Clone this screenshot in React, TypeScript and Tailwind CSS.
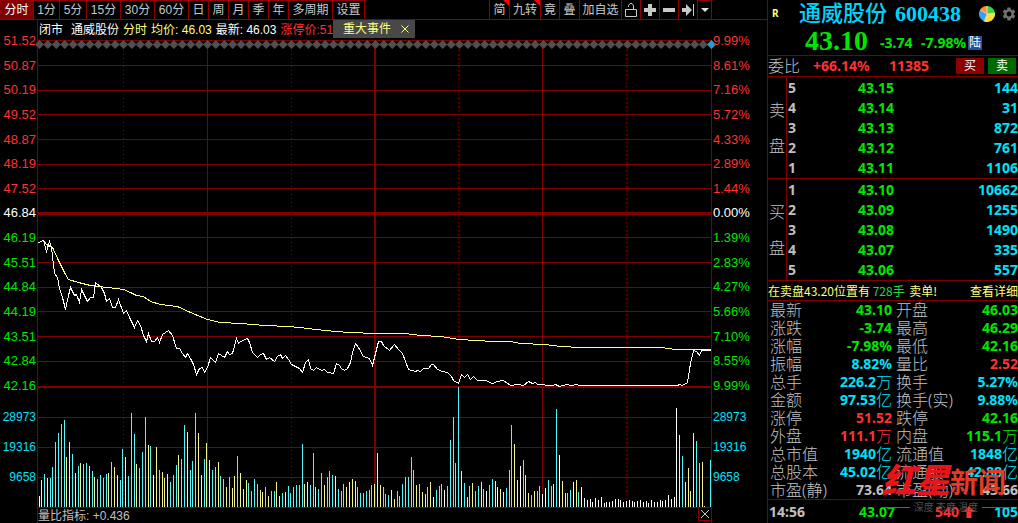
import clsx from "clsx";
import { MdSettings } from "react-icons/md";

type Tone = "up" | "down" | "cyan" | "gray" | "white";

const toneClass: Record<Tone, string> = {
  up: "text-[#ff3232]",
  down: "text-[#00e600]",
  cyan: "text-[#00e1fa]",
  gray: "text-[#c0c0c0]",
  white: "text-white",
};

const periods = [
  { label: "分时", width: "w-[34px]", active: true },
  { label: "1分", width: "w-[26px]" },
  { label: "5分", width: "w-[27px]" },
  { label: "15分", width: "w-[34px]" },
  { label: "30分", width: "w-[34px]" },
  { label: "60分", width: "w-[34px]" },
  { label: "日", width: "w-5" },
  { label: "周", width: "w-5" },
  { label: "月", width: "w-5" },
  { label: "季", width: "w-5" },
  { label: "年", width: "w-5" },
  { label: "多周期", width: "w-11" },
  { label: "设置", width: "w-8" },
];

const tools = [
  { label: "简", width: "w-5", flag: true },
  { label: "九转", width: "w-[31px]", flag: true },
  { label: "竟", width: "w-[19px]" },
  { label: "叠", width: "w-5" },
  { label: "加自选", width: "w-[42px]" },
];

const prices = ["51.52", "50.87", "50.19", "49.52", "48.87", "48.19", "47.52", "46.84", "46.19", "45.51", "44.84", "44.19", "43.51", "42.84", "42.16"];
const percents = ["9.99%", "8.61%", "7.16%", "5.72%", "4.33%", "2.89%", "1.44%", "0.00%", "1.39%", "2.83%", "4.27%", "5.66%", "7.10%", "8.55%", "9.99%"];
const volumes = ["28973", "19316", "9658"];

const gridRows = [65, 90, 114, 139, 164, 188, 237, 262, 287, 311, 336, 361, 417, 447, 477, 507];

const priceLine =
  "38,242 43,240 46,251 49,241 51,247 54,273 57,277 59,288 62,297 65,309 68,295 70,287 74,295 76,294 79,302 81,289 84,295 87,301 90,297 93,297 95,282 101,287 104,293 106,301 109,298 112,307 115,307 118,299 123,313 126,310 129,317 134,327 137,320 140,325 143,335 146,341 148,333 151,341 154,341 157,337 159,342 162,334 168,330 172,335 176,348 179,348 182,353 185,357 187,353 190,358 193,364 196,374 199,368 202,367 204,372 207,367 210,357 215,362 218,353 224,357 227,351 229,354 232,353 236,338 238,343 240,341 247,338 249,342 252,352 257,357 260,354 263,353 266,359 269,357 274,361 277,356 280,354 282,358 285,355 288,359 291,364 299,368 302,372 305,362 308,359 310,368 313,370 316,367 321,370 324,369 327,372 333,373 336,363 339,365 341,368 344,370 347,368 350,362 352,352 355,343 358,347 363,356 369,358 372,365 375,353 378,341 381,341 383,345 389,350 394,344 398,349 402,353 408,369 415,371 417,370 420,371 423,368 428,368 431,364 433,364 437,369 442,371 447,372 451,376 453,380 458,383 461,374 464,377 467,374 470,379 473,376 477,380 485,380 492,383 497,381 503,380 510,385 518,384 523,385 528,381 532,383 535,382 537,384 552,385 555,384 559,386 566,384 571,385 576,384 579,385 677,385 679,384 682,385 687,382 690,363 693,350 696,351 699,355 701,350 710,350";

const averageLine =
  "38,242 43,240 46,244 52,247 58,260 64,272 68,279 78,282 90,285 107,287 123,289 130,292 136,295 143,296 150,301 160,304 177,306 190,312 207,319 220,322 240,323 265,325 287,326 300,327 315,329 335,331 350,332 374,333 405,333 420,335 441,336 458,339 477,340 492,341 510,341 520,343 545,344 560,346 580,347 664,347 665,348 678,349 710,349";

// one token per minute bucket: colour key + bar height
const bars = `w11 y27 c33 y29 c29 c40 c65 c74 c83 c87 y50 y65 c53 y34 c41 y44 c43 c44 y41 c36
y30 c28 c32 c29 c33 y34 c45 y40 y32 c27 c58 y50 c31 c94 c73 y43 c39 c55 c90 y62
c61 w32 y60 c37 y35 y29 y33 c25 c32 c42 y52 c48 c82 y75 c37 c46 c94 y74 y32 c48
y64 y47 c37 c40 y45 c31 c28 y20 c30 y19 y31 c51
y34 y18 y27 c24 c16 c28 c23 y17 y15 c20 y11 c16 c16 y25 y11 c14 y15 c21 c14 c20
c22 c22 c63 y23 y25 c22 c54 y20 c18 c34 y22 c30 c36 c32 y31 c18 c16 c23 y20 y25
y28 y26 c20 c14 c14 c16 c17 c22 y23 y54 y22 c20 c13 c12 y17 y8 c16 c11 c23 c30
c30 c50 c37 y22 c23 y15 y13 c20 y25 w10 c17 c21 c23 w17 c21 c67 c90 c44 c120 y36
c24 y10 c21 y24 c16 c21
y25 c18 w16 c22 c28 y26 w20 y18 y15 c19 c37 c82 y63 y27 w41 c47 y32 y14 c12 y16
c16 c21 w13 w19 c27 c21 y23 c98 w52 y26 y14 c14 c17 w25 y27 c15 w20 w9 w7 w8
w5 w9 w7 w10 w4 w5 w5 w6 w8 w8 w7 w5 w6 w7 w6 w5 w6 w7 w5 w6
w4 w7 w5 w5 w7 w6 w7 w12 w8 w10 w99 y72 c51 y25 y39 y16 y74 c66 c44 y45 y1 c0 c47`.split(/\s+/);

const barColor: Record<string, string> = { w: "#ffffff", y: "#f5f58c", c: "#54f5f5" };

const asks = [
  ["5", "43.15", "144"],
  ["4", "43.14", "31"],
  ["3", "43.13", "872"],
  ["2", "43.12", "761"],
  ["1", "43.11", "1106"],
];

const bids = [
  ["1", "43.10", "10662"],
  ["2", "43.09", "1255"],
  ["3", "43.08", "1490"],
  ["4", "43.07", "335"],
  ["5", "43.06", "557"],
];

type Stat = [string, string, Tone];

const stats: [Stat, Stat][] = [
  [["最新", "43.10", "down"], ["开盘", "46.03", "down"]],
  [["涨跌", "-3.74", "down"], ["最高", "46.29", "down"]],
  [["涨幅", "-7.98%", "down"], ["最低", "42.16", "down"]],
  [["振幅", "8.82%", "cyan"], ["量比", "2.52", "up"]],
  [["总手", "226.2万", "cyan"], ["换手", "5.27%", "cyan"]],
  [["金额", "97.53亿", "cyan"], ["换手(实)", "9.88%", "cyan"]],
  [["涨停", "51.52", "up"], ["跌停", "42.16", "down"]],
  [["外盘", "111.1万", "up"], ["内盘", "115.1万", "down"]],
  [["总市值", "1940亿", "cyan"], ["流通值", "1848亿", "cyan"]],
  [["总股本", "45.02亿", "cyan"], ["流通股", "42.88亿", "cyan"]],
  [["市盈(静)", "73.64", "gray"], ["市盈(动)", "43.66", "gray"]],
];

const toolButton = "relative flex shrink-0 items-center justify-center border-l border-[#900000]";

function Toolbar() {
  return (
    <nav className="flex h-5 justify-between border-b border-[#900000] text-xs leading-4 text-[#c8c8c8]">
      <div className="flex border-t border-[#900000]">
        {periods.map((p) => (
          <button
            key={p.label}
            className={clsx(
              "shrink-0 whitespace-nowrap border-r border-[#900000] text-center",
              p.width,
              p.active && "bg-[#800000] text-white",
            )}
          >
            {p.label}
          </button>
        ))}
      </div>
      <div className="mr-[55px] flex border-r border-[#900000]">
        {tools.map((t) => (
          <button key={t.label} className={clsx(toolButton, t.width, "whitespace-nowrap")}>
            {t.label}
            {t.flag ? (
              <svg className="absolute right-0 top-0 h-[6px] w-[6px]" viewBox="0 0 6 6" aria-hidden="true">
                <path d="M0 0h6v6z" fill="#ff0000" />
              </svg>
            ) : null}
          </button>
        ))}
        <button className={clsx(toolButton, "w-[19px]")} aria-label="锁定">
          <svg className="h-4 w-3" viewBox="0 0 12 16" fill="none" stroke="#c8c8c8" aria-hidden="true">
            <path d="M.5 7.500h11v7h-11zM3.500 5V3.500l1.500-2h2l1.500 2v4" />
          </svg>
        </button>
        <button className={clsx(toolButton, "w-[19px]")} aria-label="放大">
          <svg className="h-3 w-3" viewBox="0 0 12 12" shapeRendering="crispEdges" aria-hidden="true">
            <path d="M4 0h4v4h4v4H8v4H4V8H0V4h4z" fill="#c8c8c8" />
          </svg>
        </button>
        <button className={clsx(toolButton, "w-[19px]")} aria-label="缩小">
          <svg className="h-3 w-3" viewBox="0 0 12 12" shapeRendering="crispEdges" aria-hidden="true">
            <path d="M0 4h12v4H0z" fill="#c8c8c8" />
          </svg>
        </button>
        <button className={clsx(toolButton, "w-[19px]")} aria-label="最后">
          <svg className="h-3 w-3" viewBox="0 0 12 12" aria-hidden="true">
            <path d="M0 4h4V0l6 6-6 6V8H0zM11 0h1v12h-1z" fill="#c8c8c8" />
          </svg>
        </button>
        <button className={clsx(toolButton, "w-[14px] border-t")} aria-label="更多">
          <svg className="h-1 w-2" viewBox="0 0 8 4" aria-hidden="true">
            <path d="M0 0h8L4 4z" fill="#e0e0e0" />
          </svg>
        </button>
      </div>
    </nav>
  );
}

function Axis({ values, side }: { values: string[]; side: "left" | "right" }) {
  return (
    <div
      className={clsx(
        "shrink-0 pt-[13px] text-[13px]",
        side === "left" ? "w-[37px] pr-px text-right" : "w-[55px] pl-px",
      )}
    >
      <div className="flex h-[361px] flex-col justify-between">
        {values.map((v, i) => (
          <span key={i} className={clsx("leading-4", toneClass[i < 7 ? "up" : i === 7 ? "white" : "down"])}>
            {v}
          </span>
        ))}
      </div>
      <div className="mt-2 flex flex-col">
        {volumes.map((v) => (
          <span key={v} className="text-xs leading-[30px] text-[#00e1fa]">{v}</span>
        ))}
      </div>
    </div>
  );
}

function IntradayChart() {
  const step = (710.5 - 39) / (bars.length - 1);

  return (
    <svg
      className="block h-[468px] w-full overflow-visible"
      viewBox="37 40 675 468"
      preserveAspectRatio="none"
      role="img"
      aria-label="分时"
    >
      <g fill="#800000" shapeRendering="crispEdges">
        <rect x="37" y="40" width="675" height="1" />
        {gridRows.map((y) => (
          <rect key={y} x="37" y={y} width="675" height="1" />
        ))}
        <rect x="37" y="212" width="675" height="3" />
        <rect x="37" y="386" width="675" height="2" />
        <rect x="207" y="40" width="1" height="468" />
        <rect x="374" y="40" width="2" height="468" />
        <rect x="542" y="40" width="1" height="468" />
        <rect x="711" y="40" width="1" height="468" />
      </g>
      <g stroke="#800000" strokeDasharray="1 3" shapeRendering="crispEdges">
        {[123.5, 291.5, 458.5, 626.5].map((x) => (
          <line key={x} x1={x} x2={x} y1="50" y2="507" />
        ))}
      </g>
      <rect x="38" y="44" width="673" height="1" fill="#505050" />
      {Array.from({ length: 81 }, (_, i) => {
        const x = 39.5 + i * 8.4;
        return (
          <path
            key={i}
            d={`M${x - 4.5} 44.5L${x} 40L${x + 4.5} 44.5L${x} 49z`}
            fill={i === 80 ? "#2a9ad0" : "#505050"}
          />
        );
      })}
      <g shapeRendering="crispEdges">
        {bars.map((bar, i) => {
          const height = Number(bar.slice(1));
          return (
            <rect key={i} x={Math.floor(39 + i * step)} y={507 - height} width="1" height={height} fill={barColor[bar[0]]} />
          );
        })}
      </g>
      <g fill="none" shapeRendering="crispEdges" transform="translate(.5 .5)">
        <polyline points={averageLine} stroke="#ffff80" />
        <polyline points={priceLine} stroke="#ffffff" />
      </g>
    </svg>
  );
}

function ChartPanel() {
  return (
    <div className="flex">
      <Axis values={prices} side="left" />
      <section className="min-w-0 flex-1">
        <header className="flex h-5 border-l border-[#800000] text-xs leading-5">
          <div className="flex w-[295px] shrink-0 overflow-hidden whitespace-nowrap pl-px text-white">
            <span>闭市</span>
            <span className="ml-2">通威股份</span>
            <span className="ml-1 text-[#ffff80]">分时</span>
            <span className="ml-1 text-[#ffff80]">均价: 46.03</span>
            <span className="ml-1">最新: 46.03</span>
            <span className="ml-1 text-[#ff3232]">涨停价:51</span>
          </div>
          <div className="flex h-[18px] w-[82px] shrink-0 items-center justify-between bg-[#484848] pl-[10px] pr-[6px] text-[#ffff80]">
            <span>重大事件</span>
            <button aria-label="关闭">
              <svg className="h-2 w-2" viewBox="0 0 8 8" stroke="#ffff80" aria-hidden="true">
                <path d="M.5.5l7 7M7.500.5l-7 7" />
              </svg>
            </button>
          </div>
        </header>
        <div className="shadow-[inset_1px_0_0_#800000]">
          <IntradayChart />
          <footer className="flex h-[15px] items-start justify-between border-r border-[#800000] pl-px text-xs leading-4 text-[#c0c0c0]">
            <span>量比指标: +0.436</span>
            <button className="grid h-[13px] w-[13px] place-items-center border-b border-l border-[#800000]" aria-label="关闭指标">
              <svg className="h-2 w-2" viewBox="0 0 8 8" stroke="#c8c8c8" aria-hidden="true">
                <path d="M0 0l8 8M8 0L0 8" />
              </svg>
            </button>
          </footer>
        </div>
      </section>
      <Axis values={percents} side="right" />
    </div>
  );
}

function OrderRows({ title, rows }: { title: string; rows: string[][] }) {
  return (
    <div className="flex border-b border-[#800000]">
      <div className="flex w-[19px] shrink-0 flex-col items-center justify-center gap-5 border-r border-[#800000] text-base font-light leading-4 text-[#c0c0c0]">
        {title.split("").map((c) => (
          <span key={c}>{c}</span>
        ))}
      </div>
      <table className="mt-px w-full table-fixed font-['Noto_Sans','Noto_Sans_CJK_SC',sans-serif] text-sm font-bold leading-5">
        <tbody>
          {rows.map(([level, price, amount]) => (
            <tr key={level} className="h-5">
              <td className="w-5 p-0 pl-px text-[#c0c0c0]">{level}</td>
              <td className="w-[87px] p-0 text-right text-[#00e600]">{price}</td>
              <td className="p-0 text-right text-[#00e1fa]">{amount}</td>
            </tr>
          ))}
        </tbody>
      </table>
    </div>
  );
}

function StatCells({ stat: [label, value, tone], second }: { stat: Stat; second?: boolean }) {
  const unit = /[万亿]$/.test(value) ? value.slice(-1) : "";
  return (
    <>
      <th className={clsx("p-0 text-left align-top", second ? "w-[66px] pl-1" : "w-[60px] pl-[2px]")}>
        <div className="h-[18px] text-base font-light leading-[18px] text-[#c0c0c0]">{label}</div>
      </th>
      <td className={clsx("p-0 align-top", !second && "w-[64px]")}>
        <div className={clsx("flex h-[18px] items-center justify-end text-sm font-bold leading-[18px]", toneClass[tone])}>
          <span>{unit ? value.slice(0, -1) : value}</span>
          {unit ? <span className="text-base font-light leading-[18px]">{unit}</span> : null}
        </div>
      </td>
    </>
  );
}

function QuotePanel() {
  return (
    <aside className="relative w-[251px] shrink-0 overflow-hidden border-l border-[#800000] font-['Noto_Sans','Noto_Sans_CJK_SC',sans-serif]">
      <header className="border-b border-[#800000]">
        <div className="flex h-[27px] items-center pl-1">
          <span className="w-[27px] text-[10px] font-bold text-[#ffff80]">R</span>
          <h1 className="flex gap-2 whitespace-nowrap font-['Liberation_Serif','Noto_Sans_CJK_SC',serif] text-[22px] font-bold leading-6 text-[#00d2fa]">
            <span className="font-medium">通威股份</span>
            <span>600438</span>
          </h1>
          <button className="ml-auto" aria-label="板块">
            <svg className="h-4 w-4" viewBox="0 0 16 16" aria-hidden="true">
              <path d="M8 8V0a8 8 0 0 1 8 7z" fill="#30d848" />
              <path d="M8 8l8-1a8 8 0 0 1-11 8.400z" fill="#ffe030" />
              <path d="M8 8l-3 7.400A8 8 0 0 1 1 4z" fill="#38a0f0" />
              <path d="M8 8L1 4a8 8 0 0 1 7-4z" fill="#ff9030" />
              <path d="M8 0v8l8-1M8 8l-3 7.400M8 8L1 4" fill="none" stroke="#fff" strokeWidth=".6" />
            </svg>
          </button>
          <button className="ml-[6px] mr-px" aria-label="设置">
            <MdSettings className="h-4 w-4 text-[#707070]" aria-hidden="true" />
          </button>
        </div>
        <div className="flex h-7 items-center whitespace-nowrap pl-[37px] text-sm font-bold text-[#00e600]">
          <strong className="w-[75px] font-['Liberation_Serif',serif] text-[28px] leading-7">43.10</strong>
          <span className="w-[41px] pt-1 leading-5">-3.74</span>
          <span className="w-[47px] pt-1 leading-5">-7.98%</span>
          <span className="mt-1 bg-[#284f9b] px-px text-xs font-normal leading-[14px] text-white">陆</span>
        </div>
      </header>

      <div className="flex h-[21px] items-center border-b border-[#800000] text-sm font-bold text-[#ff3232]">
        <span className="w-[45px] text-base font-light text-[#c0c0c0]">委比</span>
        <span className="w-[76px]">+66.14%</span>
        <span>11385</span>
        <button className="ml-auto h-4 w-7 bg-[#8b0000] text-xs font-normal leading-4 text-white">买</button>
        <button className="ml-1 mr-[2px] h-4 w-7 bg-[#006800] text-xs font-normal leading-4 text-white">卖</button>
      </div>

      <OrderRows title="卖盘" rows={asks} />
      <OrderRows title="买盘" rows={bids} />

      <div className="flex h-5 items-center justify-between whitespace-nowrap border-b border-[#800000] font-['Noto_Sans_CJK_SC',sans-serif] text-xs leading-4 text-[#ffff80]">
        <span>
          在卖盘43.20位置有 <span className="mr-[2px] text-[#20d840]">728手</span> 卖单!
        </span>
        <a href="#detail">查看详细</a>
      </div>

      <table className="w-full table-fixed">
        <tbody>
          {stats.map(([a, b]) => (
            <tr key={a[0]} className="whitespace-nowrap">
              <StatCells stat={a} />
              <StatCells stat={b} second />
            </tr>
          ))}
        </tbody>
      </table>

      <div className="flex h-6 items-center border-t border-[#800000] pl-px text-sm font-bold leading-5">
        <span className="w-[90px] text-[#c0c0c0]">14:56</span>
        <span className="w-[76px] text-[#00e600]">43.07</span>
        <span className="text-[#ff3232]">540</span>
        <svg className="ml-1 h-3 w-3" viewBox="0 0 12 12" aria-hidden="true">
          <path d="M6 0l6 6H8.500v6h-5V6H0z" fill="#ff3232" />
        </svg>
        <span className="ml-auto text-[#00e1fa]">105</span>
      </div>

      <div className="pointer-events-none absolute bottom-[10px] right-2 w-[128px] font-['Noto_Sans_CJK_SC',sans-serif]">
        <div className="flex items-end whitespace-nowrap text-[#e8141c]">
          <span className="text-[34px] font-black italic leading-[44px]">红星</span>
          <span className="text-[28px] font-bold leading-10 text-[#e63a28]">新闻</span>
        </div>
        <div className="flex items-center gap-1 whitespace-nowrap text-[10px] leading-3 text-[#505050]">
          <span className="h-px flex-1 bg-[#606060]" />
          深度 态度 温度
          <span className="h-px flex-1 bg-[#606060]" />
        </div>
      </div>
    </aside>
  );
}

export default function App() {
  return (
    <div className="flex min-h-screen overflow-hidden bg-black font-['Liberation_Sans','Noto_Sans_CJK_SC',sans-serif] text-white">
      <main className="min-w-0 flex-1">
        <Toolbar />
        <ChartPanel />
      </main>
      <QuotePanel />
    </div>
  );
}
